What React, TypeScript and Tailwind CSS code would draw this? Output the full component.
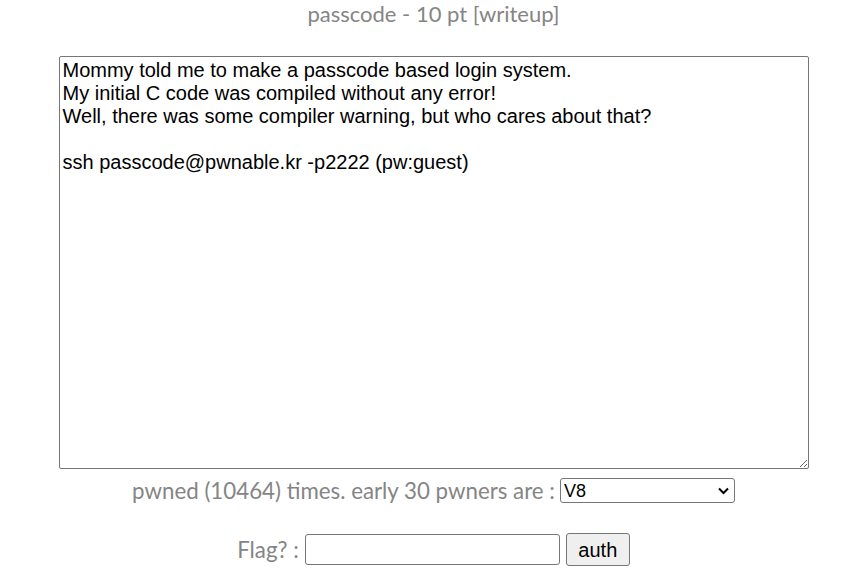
export default function App() {
  const desc =
    "Mommy told me to make a passcode based login system.\nMy initial C code was compiled without any error!\nWell, there was some compiler warning, but who cares about that?\n\nssh passcode@pwnable.kr -p2222 (pw:guest)";
  return (
    <div className="w-[845px] h-[579px] bg-white overflow-hidden pl-[22px] flex flex-col items-center" style={{ fontFamily: "Lato, 'Open Sans', sans-serif" }}>
      <div className="mt-[2px] h-[24px] text-[22px] leading-[24px] text-[#858585]">passcode - 10 pt [writeup]</div>
      <textarea
        readOnly
        defaultValue={desc}
        className="mt-[30px] w-[750px] h-[413px] border border-[#767676] rounded-[2px] px-[3px] py-[2px] text-[20px] leading-[23px] text-black resize-y outline-none"
        style={{ fontFamily: "'Liberation Sans', Arial, sans-serif" }}
      />
      <div className="mt-[9px] flex items-center h-[25px]">
        <span className="text-[22.3px] text-[#858585] mr-[5px]">pwned (10464) times. early 30 pwners are :</span>
        <div className="relative w-[175px] h-[25px] border border-[#767676] rounded-[3px] bg-white flex items-center pl-[3px]" style={{ fontFamily: "'Liberation Sans', Arial, sans-serif" }}>
          <span className="text-[18px] text-black leading-none">V8</span>
          <svg className="absolute right-[5px] top-[8px]" width="11" height="8" viewBox="0 0 11 8"><path d="M1 1.5 L5.5 6 L10 1.5" stroke="black" strokeWidth="2" fill="none" /></svg>
        </div>
      </div>
      <div className="mt-[30px] flex items-center">
        <span className="text-[22.3px] text-[#858585] mr-[6px]">Flag? :</span>
        <div className="w-[255px] h-[31px] border border-[#767676] rounded-[3px] bg-white"></div>
        <button className="ml-[6px] w-[64px] h-[33px] border border-[#767676] rounded-[3px] bg-[#efefef] text-[20px] text-black" style={{ fontFamily: "'Liberation Sans', Arial, sans-serif" }}>auth</button>
      </div>
    </div>
  );
}
